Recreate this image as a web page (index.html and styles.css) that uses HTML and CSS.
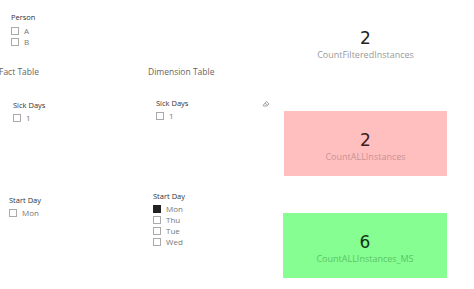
FILE: index.html
```html
<!DOCTYPE html>
<html lang="en">
  <head>
    <meta charset="UTF-8" />
    <meta name="viewport" content="width=device-width, initial-scale=1.0" />
    <title>Report</title>
    <link rel="stylesheet" href="styles.css">
  </head>
  <body>
    <main class="page">
      <section class="slicers">
        <div class="slicer person">
          <strong class="slicerTitle">Person</strong>
          <ul class="items">
            <li><span class="box"></span>A</li>
            <li><span class="box"></span>B</li>
          </ul>
        </div>

        <h2 class="tableName fact">Fact Table</h2>
        <h2 class="tableName dim">Dimension Table</h2>

        <div class="slicer factSick">
          <strong class="slicerTitle">Sick Days</strong>
          <ul class="items">
            <li><span class="box"></span>1</li>
          </ul>
        </div>
        <div class="slicer dimSick">
          <div class="slicerHead">
            <strong class="slicerTitle">Sick Days</strong>
            <svg class="eraser" width="8" height="7" viewBox="0 0 8 7">
              <path d="M1 5.5 L4.5 1.5 L7 3.8 L5 6 H2 Z M3 3.3 L5.6 5" fill="none" stroke="#888" stroke-width="0.8" />
            </svg>
          </div>
          <ul class="items">
            <li><span class="box"></span>1</li>
          </ul>
        </div>

        <div class="slicer factStart">
          <strong class="slicerTitle">Start Day</strong>
          <ul class="items">
            <li><span class="box"></span>Mon</li>
          </ul>
        </div>
        <div class="slicer dimStart">
          <strong class="slicerTitle">Start Day</strong>
          <ul class="items">
            <li><span class="box checked"></span>Mon</li>
            <li><span class="box"></span>Thu</li>
            <li><span class="box"></span>Tue</li>
            <li><span class="box"></span>Wed</li>
          </ul>
        </div>
      </section>

      <section class="cards">
        <div class="card plain">
          <strong class="value">2</strong>
          <span class="caption">CountFilteredInstances</span>
        </div>
        <div class="card red">
          <strong class="value">2</strong>
          <span class="caption">CountALLInstances</span>
        </div>
        <div class="card green">
          <strong class="value">6</strong>
          <span class="caption">CountALLInstances_MS</span>
        </div>
      </section>
    </main>
  </body>
</html>
```

FILE: styles.css
```css
* {
  margin: 0;
  padding: 0;
  box-sizing: border-box;
}

body {
  font-family: "Open Sans", "Noto Sans", sans-serif;
  background: #fff;
  color: #333;
  overflow: hidden;
}

.page {
  display: flex;
  width: 474px;
  height: 289px;
}

.slicers {
  width: 284px;
  display: grid;
  grid-template-columns: 148px 136px;
  grid-template-rows: 66px 12px 112px auto;
  align-items: start;
}

.person {
  grid-column: 1 / 3;
  padding: 12px 0 0 11px;
}

.tableName {
  font-size: 8.5px;
  font-weight: normal;
  line-height: 12px;
  color: #666;
}

.fact {
  margin-left: -1px;
}

.slicerTitle {
  display: block;
  font-size: 7.5px;
  font-weight: normal;
  line-height: 11px;
  color: #333;
}

.items {
  list-style: none;
  margin-top: 1px;
}

.person .items {
  margin-top: 2px;
}

.items li {
  display: flex;
  align-items: center;
  height: 11px;
  font-size: 8px;
  color: #777;
}

.box {
  width: 8px;
  height: 8px;
  border: 1px solid #aaa;
  margin-right: 5px;
}

.box.checked {
  background: #222;
  border-color: #222;
}

.factSick {
  padding: 22px 0 0 13px;
}

.dimSick {
  padding: 20px 14px 0 8px;
}

.slicerHead {
  display: flex;
  justify-content: space-between;
  align-items: center;
}

.factStart {
  padding: 5px 0 0 9px;
}

.dimStart {
  padding: 1px 0 0 5px;
}

.cards {
  width: 163px;
  display: flex;
  flex-direction: column;
  gap: 37px;
  padding-top: 9px;
}

.card {
  height: 65px;
  display: flex;
  flex-direction: column;
  align-items: center;
  justify-content: center;
  padding-top: 6px;
}

.value {
  font-family: "DejaVu Sans", sans-serif;
  font-size: 17px;
  font-weight: normal;
  line-height: 20px;
  color: #222;
}

.caption {
  font-size: 9px;
  line-height: 13px;
  color: #9a9a9a;
}

.red {
  background: #ffbfbf;
}

.red .value {
  color: #3a2020;
}

.red .caption {
  color: #c99393;
}

.green {
  margin-left: -1px;
  background: #86fe91;
}

.green .value {
  color: #133317;
}

.green .caption {
  color: #5cc468;
}
```
